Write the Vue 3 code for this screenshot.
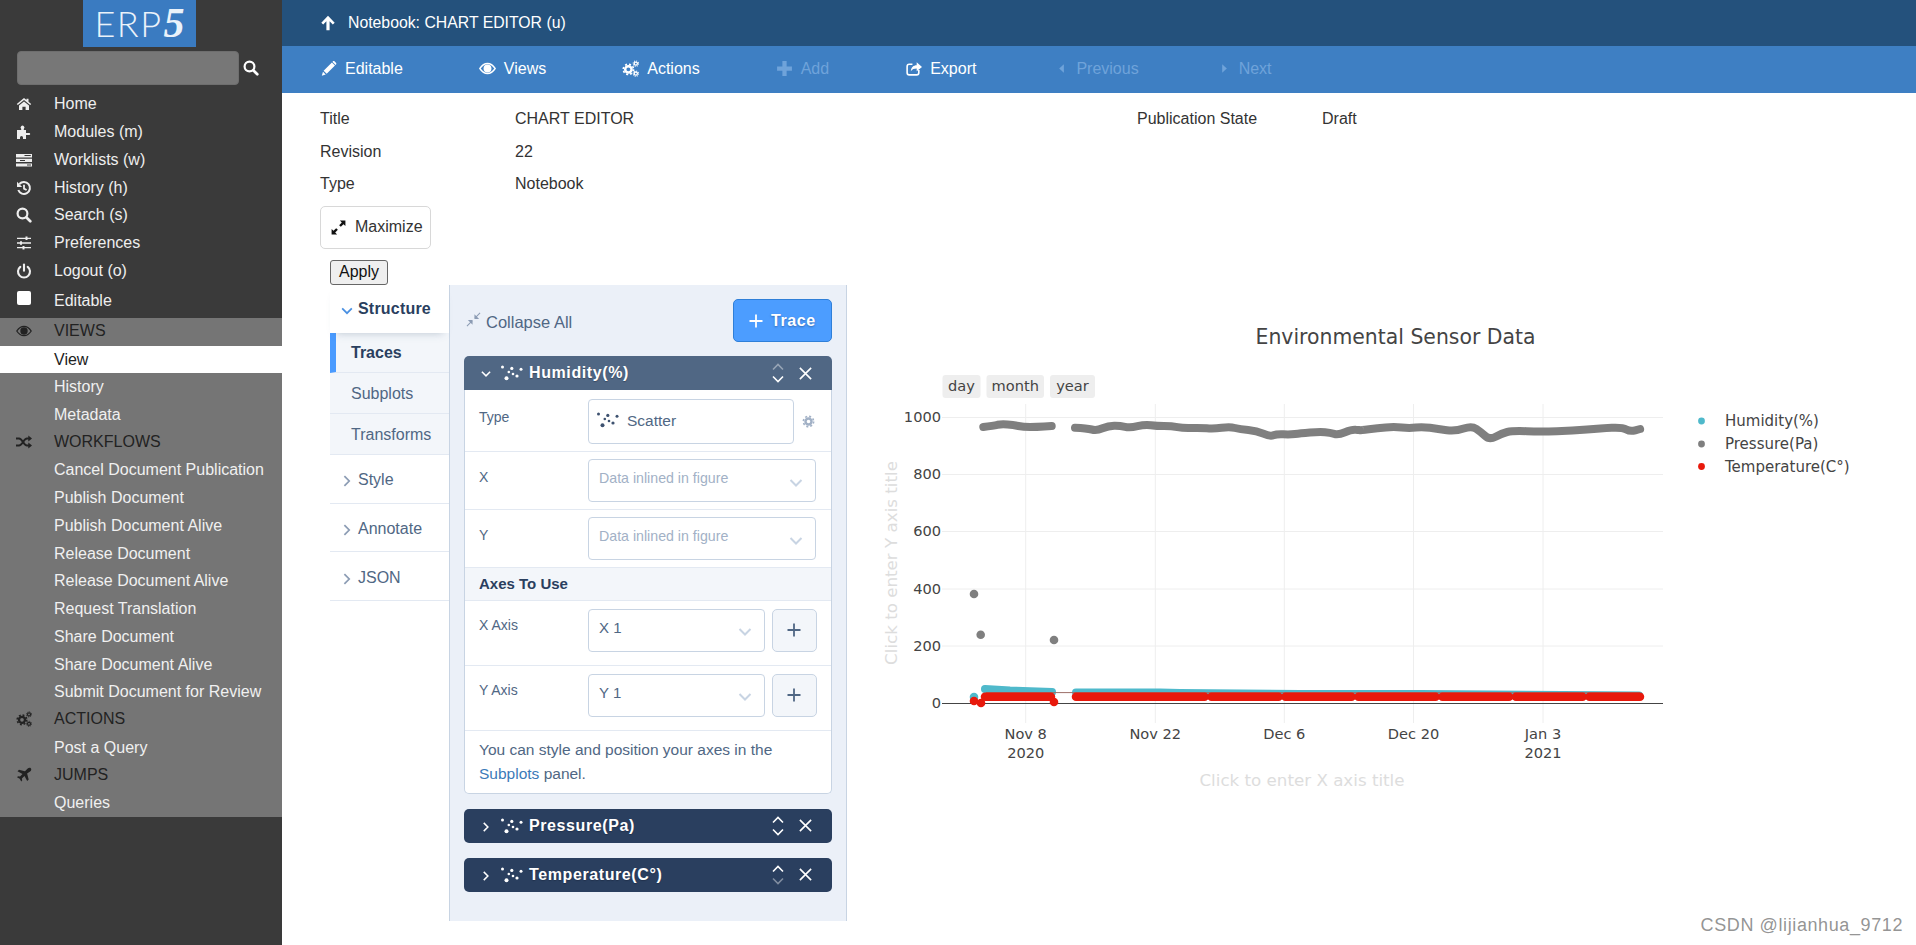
<script setup>
const sideTop = [
  { icon: 'home', label: 'Home' },
  { icon: 'puzzle', label: 'Modules (m)' },
  { icon: 'tasks', label: 'Worklists (w)' },
  { icon: 'history', label: 'History (h)' },
  { icon: 'search', label: 'Search (s)' },
  { icon: 'sliders', label: 'Preferences' },
  { icon: 'power', label: 'Logout (o)' }
]
const sideLower = [
  { icon: 'eye', label: 'VIEWS', head: true },
  { label: 'View', active: true },
  { label: 'History' },
  { label: 'Metadata' },
  { icon: 'random', label: 'WORKFLOWS', head: true },
  { label: 'Cancel Document Publication' },
  { label: 'Publish Document' },
  { label: 'Publish Document Alive' },
  { label: 'Release Document' },
  { label: 'Release Document Alive' },
  { label: 'Request Translation' },
  { label: 'Share Document' },
  { label: 'Share Document Alive' },
  { label: 'Submit Document for Review' },
  { icon: 'cogs', label: 'ACTIONS', head: true },
  { label: 'Post a Query' },
  { icon: 'plane', label: 'JUMPS', head: true },
  { label: 'Queries' }
]
const tools = [
  { icon: 'pencil', label: 'Editable' },
  { icon: 'eye', label: 'Views' },
  { icon: 'cogs', label: 'Actions' },
  { icon: 'plus', label: 'Add', off: true },
  { icon: 'share', label: 'Export' },
  { icon: 'caretl', label: 'Previous', off: true, small: true },
  { icon: 'caretr', label: 'Next', off: true, small: true }
]
const ctabs = ['Style', 'Annotate', 'JSON']
const closed = [
  { label: 'Pressure(Pa)' },
  { label: 'Temperature(C°)', last: true }
]

const toPts = (list, ox, oy, sx) => list.map(([x, y]) => [ox + x / sx, oy + y / 3])
const smooth = (p) => {
  let d = `M${p[0][0].toFixed(1)} ${p[0][1].toFixed(1)}`
  for (let i = 1; i < p.length - 1; i++) {
    const mx = (p[i][0] + p[i + 1][0]) / 2
    const my = (p[i][1] + p[i + 1][1]) / 2
    d += ` Q${p[i][0].toFixed(1)} ${p[i][1].toFixed(1)} ${mx.toFixed(1)} ${my.toFixed(1)}`
  }
  const l = p[p.length - 1]
  return d + ` L${l[0].toFixed(1)} ${l[1].toFixed(1)}`
}
const pressure1 = smooth(toPts([[340, 381], [370, 377], [395, 372], [430, 375], [460, 381], [500, 381], [545, 378]], 870, 300, 3))
const pressure2 = smooth([
  ...toPts([[615, 383], [650, 385], [680, 392], [715, 378], [750, 377], [780, 384], [825, 373], [860, 378], [905, 378], [940, 385], [990, 383], [1030, 387], [1080, 380], [1110, 388], [1160, 392], [1200, 410], [1220, 402], [1260, 404], [1290, 400], [1350, 395], [1380, 398], [1405, 405], [1445, 388], [1470, 390]], 870, 300, 3),
  ...toPts([[0, 121], [50, 115], [95, 110], [140, 115], [175, 110], [220, 117], [270, 124], [315, 107], [340, 125], [365, 150], [400, 130], [430, 122], [510, 125], [600, 122], [680, 115], [740, 112], [762, 125], [790, 117]], 1360, 390, 2.82)
])
const outliers = [[974, 594], [980.7, 634.7], [1054, 640]]
const yTicks = [[1000, 417.5], [800, 474.5], [600, 531.5], [400, 589], [200, 646]]
const xTicks = [
  { x: 1025.7, a: 'Nov 8', b: '2020' },
  { x: 1155.3, a: 'Nov 22' },
  { x: 1284.3, a: 'Dec 6' },
  { x: 1413.5, a: 'Dec 20' },
  { x: 1543, a: 'Jan 3', b: '2021' }
]
const ranges = [
  { x: 942.5, w: 38, label: 'day' },
  { x: 986.5, w: 57.5, label: 'month' },
  { x: 1050, w: 45, label: 'year' }
]
const legend = [
  { y: 421, c: '#4fb9cb', label: 'Humidity(%)' },
  { y: 444, c: '#7f7f7f', label: 'Pressure(Pa)' },
  { y: 466.5, c: '#e8190c', label: 'Temperature(C°)' }
]
const notches = [1076, 1208, 1282, 1355, 1439, 1512.5, 1586, 1640]
const redSegs = notches.slice(0, -1).map((a, i) => ({
  x1: i === 0 ? a : a + 3.4,
  x2: i === notches.length - 2 ? notches[i + 1] : notches[i + 1] - 3.4
}))
</script>

<template>
  <svg class="sprite" aria-hidden="true">
    <symbol id="i-home" viewBox="0 0 16 16"><path d="M8 2 .8 8l1 1.1L8 4l6.2 5.1 1-1.1-2.700-2.300V2.800h-2v1.200z"/><path d="M3 9.600 8 5.400l5 4.200V14H9.600v-3.200H6.400V14H3z"/></symbol>
    <symbol id="i-puzzle" viewBox="0 0 16 16"><path d="M1 6h4.200V5a1.900 1.900 0 1 1 2.600 0v1H10v3h3.200a1 1 0 0 1 0 2H10v4H7v-1.600a1.500 1.500 0 0 0-3 0V15H1z"/></symbol>
    <symbol id="i-tasks" viewBox="0 0 16 16"><path d="M0 2h16v3.400H0zM0 6.700h16v3.400H0zM0 11.400h16v3.100H0z"/><path fill="#3a3a3a" d="M8.500 3h6.300v1H8.500zM4 7.900h5v1H4zM11 12.400h4v1h-4z"/></symbol>
    <symbol id="i-history" viewBox="0 0 16 16"><path fill="none" stroke="currentColor" stroke-width="2" d="M3.400 4A6 6 0 1 1 2.300 10"/><path d="M1 1.800V7h5.200z"/><path fill="none" stroke="currentColor" stroke-width="1.800" d="M8 4.800v3.800l2.600 1.400"/></symbol>
    <symbol id="i-search" viewBox="0 0 16 16"><circle cx="6.500" cy="6.500" r="4.900" fill="none" stroke="currentColor" stroke-width="2.200"/><path stroke="currentColor" stroke-width="2.700" stroke-linecap="round" d="m10.500 10.500 3.800 3.800"/></symbol>
    <symbol id="i-sliders" viewBox="0 0 16 16"><path stroke="currentColor" stroke-width="1.300" d="M1 3.300h14M1 8h14M1 12.700h14"/><path d="M9.500 1.500h2v3.600h-2zM4 6.200h2v3.600H4zM6.500 10.900h2v3.600h-2z"/></symbol>
    <symbol id="i-power" viewBox="0 0 16 16"><path fill="none" stroke="currentColor" stroke-width="2.100" stroke-linecap="round" d="M8 1.500v6.300"/><path fill="none" stroke="currentColor" stroke-width="2.100" stroke-linecap="round" d="M4.300 3.800a6 6 0 1 0 7.400 0"/></symbol>
    <symbol id="i-eye" viewBox="0 0 16 16"><path fill="none" stroke="currentColor" stroke-width="1.300" d="M.8 8C3 4.600 5.400 3.300 8 3.300S13 4.600 15.200 8C13 11.400 10.600 12.700 8 12.700S3 11.400.8 8z"/><circle cx="8" cy="8" r="3.700"/></symbol>
    <symbol id="i-random" viewBox="0 0 16 16"><path fill="none" stroke="currentColor" stroke-width="2" d="M0 4.500h3c3.500 0 4.500 7 8 7h2M0 11.500h3c3.500 0 4.500-7 8-7h2"/><path d="M12.300 1.500 16 4.500l-3.700 3zM12.300 8.500l3.700 3-3.700 3z"/></symbol>
    <symbol id="i-cogs" viewBox="0 0 16 16"><circle cx="6" cy="8.800" r="3" fill="none" stroke="currentColor" stroke-width="2.300"/><circle cx="6" cy="8.800" r="4.800" fill="none" stroke="currentColor" stroke-width="1.600" stroke-dasharray="1.900 1.870"/><circle cx="13" cy="3.400" r="1.500" fill="none" stroke="currentColor" stroke-width="1.200"/><circle cx="13" cy="3.400" r="2.500" fill="none" stroke="currentColor" stroke-width="1" stroke-dasharray="1 .96"/><circle cx="13" cy="12.800" r="1.500" fill="none" stroke="currentColor" stroke-width="1.200"/><circle cx="13" cy="12.800" r="2.500" fill="none" stroke="currentColor" stroke-width="1" stroke-dasharray="1 .96"/></symbol>
    <symbol id="i-plane" viewBox="0 0 16 16"><path d="M14.800 1.200c-.9-.9-2.300-.4-3.100.4L9 4.300 3 2.700 1.500 4.200l5 2.700L4 9.500l-2-.3-1 1 2.700 1.500 1.500 2.700 1-1-.3-2 2.600-2.500 2.700 5 1.500-1.500-1.600-6L14.400 4.300c.8-.8 1.300-2.200.4-3.100z"/></symbol>
    <symbol id="i-pencil" viewBox="0 0 16 16"><path d="M11.200 2.300l2.900 2.900-7.800 7.800-2.900-2.900zM12 1.400c.5-.5 1.300-.5 1.800 0l1.200 1.200c.5.500.5 1.300 0 1.800l-.3.300-2.900-2.900zM2.800 11l2.600 2.600-3.700 1.200z"/></symbol>
    <symbol id="i-plus" viewBox="0 0 16 16"><path d="M6 1h4v5h5v4h-5v5H6v-5H1V6h5z"/></symbol>
    <symbol id="i-share" viewBox="0 0 16 16"><path fill="none" stroke="currentColor" stroke-width="1.500" d="M13 9.500V12a2 2 0 0 1-2 2H4a2 2 0 0 1-2-2V6a2 2 0 0 1 2-2h3"/><path d="M5.500 10.500C5.800 7 8 5 11 5V2l5 4.500L11 10.500V8c-2.500 0-4.200.7-5.500 2.500z"/></symbol>
    <symbol id="i-caretl" viewBox="0 0 16 16"><path d="M10.500 3.500v9L5.500 8z"/></symbol>
    <symbol id="i-caretr" viewBox="0 0 16 16"><path d="M5.500 3.500v9l5-4.500z"/></symbol>
    <symbol id="i-up" viewBox="0 0 16 16"><path d="M8 .8l6.700 7-1.900 1.800-3.200-3.300V15.200H6.400V6.300L3.200 9.600 1.300 7.800z"/></symbol>
    <symbol id="i-expand" viewBox="0 0 16 16"><path d="M9.300 1.500h5.200v5.200l-1.800-1.800-2.500 2.500-1.600-1.600 2.500-2.500zM6.700 14.500H1.500V9.300l1.800 1.800 2.500-2.500 1.600 1.600-2.500 2.500z"/></symbol>
    <symbol id="i-scatter" viewBox="0 0 22 16"><circle cx="1.500" cy="2" r="1.500"/><circle cx="5.500" cy="13.200" r="2"/><circle cx="7.800" cy="7" r="1.300"/><circle cx="10.800" cy="3.400" r="1.600"/><circle cx="12" cy="9" r="1.300"/><circle cx="16" cy="11" r="1.600"/><circle cx="20" cy="4.200" r="1.500"/></symbol>
    <symbol id="i-gear" viewBox="0 0 16 16"><circle cx="8" cy="8" r="3.700" fill="none" stroke="currentColor" stroke-width="3"/><circle cx="8" cy="8" r="6.300" fill="none" stroke="currentColor" stroke-width="2" stroke-dasharray="2.500 2.450"/></symbol>
    <symbol id="i-down" viewBox="0 0 16 16"><path fill="none" stroke="currentColor" stroke-width="2" d="M2.500 5 8 10.500 13.500 5"/></symbol>
    <symbol id="i-right" viewBox="0 0 16 16"><path fill="none" stroke="currentColor" stroke-width="2" d="M5 2.500 10.500 8 5 13.500"/></symbol>
    <symbol id="i-close" viewBox="0 0 16 16"><path fill="none" stroke="currentColor" stroke-width="1.700" d="M2 2l12 12M14 2 2 14"/></symbol>
    <symbol id="i-collapse" viewBox="0 0 16 16"><path fill="none" stroke="currentColor" stroke-width="1.100" d="M15 1 9.500 6.500M1 15l5.500-5.500"/><path d="M9 2.500v5h5zM7 13.500v-5H2z"/></symbol>
    <symbol id="i-addp" viewBox="0 0 16 16"><path fill="none" stroke="currentColor" stroke-width="1.800" d="M8 1.500v13M1.500 8h13"/></symbol>
    <symbol id="i-up2" viewBox="0 0 14 14"><path fill="none" stroke="currentColor" stroke-width="1.600" d="M2 9.500 7 4.500l5 5"/></symbol>
    <symbol id="i-down2" viewBox="0 0 14 14"><path fill="none" stroke="currentColor" stroke-width="1.600" d="M2 4.500 7 9.500l5-5"/></symbol>
  </svg>

  <div class="page">
    <aside class="side">
      <div class="logo"><span class="logo-erp">ERP</span><span class="logo-five">5</span></div>
      <div class="side-search">
        <div class="side-input"></div>
        <svg class="side-search-icon"><use href="#i-search" /></svg>
      </div>
      <div class="side-row" v-for="item in sideTop" :key="item.label">
        <svg class="side-icon"><use :href="'#i-' + item.icon" /></svg>
        <span>{{ item.label }}</span>
      </div>
      <div class="side-check">
        <span class="check-box"></span>
        <span>Editable</span>
      </div>
      <div class="side-lower">
        <div
          class="side-row"
          v-for="item in sideLower"
          :key="item.label + item.icon"
          :class="{ head: item.head, active: item.active }"
        >
          <svg v-if="item.icon" class="side-icon"><use :href="'#i-' + item.icon" /></svg>
          <span v-else class="side-icon"></span>
          <span>{{ item.label }}</span>
        </div>
      </div>
    </aside>

    <main class="main">
      <header class="title-bar">
        <svg class="up-icon"><use href="#i-up" /></svg>
        <span>Notebook: CHART EDITOR (u)</span>
      </header>
      <nav class="tool-bar">
        <div class="tool" v-for="t in tools" :key="t.label" :class="{ off: t.off, small: t.small }">
          <svg class="tool-icon"><use :href="'#i-' + t.icon" /></svg>
          <span>{{ t.label }}</span>
        </div>
      </nav>

      <section class="doc">
        <div class="fields">
          <div class="field-col">
            <div class="field"><span class="f-label">Title</span><span>CHART EDITOR</span></div>
            <div class="field"><span class="f-label">Revision</span><span>22</span></div>
            <div class="field"><span class="f-label">Type</span><span>Notebook</span></div>
          </div>
          <div class="field-col right">
            <div class="field"><span class="f-label">Publication State</span><span>Draft</span></div>
          </div>
        </div>
        <button class="maxi" type="button">
          <svg class="maxi-icon"><use href="#i-expand" /></svg>
          <span>Maximize</span>
        </button>
        <button class="apply" type="button">Apply</button>

        <div class="workspace">
          <div class="tabs">
            <div class="tab-open">
              <svg class="tab-chev blue"><use href="#i-down" /></svg>
              <span>Structure</span>
            </div>
            <div class="subtab current">Traces</div>
            <div class="subtab">Subplots</div>
            <div class="subtab">Transforms</div>
            <div class="tab-closed" v-for="t in ctabs" :key="t">
              <svg class="tab-chev"><use href="#i-right" /></svg>
              <span>{{ t }}</span>
            </div>
          </div>

          <div class="panel">
            <div class="panel-top">
              <div class="collapse">
                <svg class="collapse-icon"><use href="#i-collapse" /></svg>
                <span>Collapse All</span>
              </div>
              <button class="trace-btn" type="button">
                <svg class="trace-plus"><use href="#i-addp" /></svg>
                <span>Trace</span>
              </button>
            </div>

            <div class="card-head open">
              <svg class="head-chev"><use href="#i-down" /></svg>
              <svg class="head-scatter"><use href="#i-scatter" /></svg>
              <span class="head-label">Humidity(%)</span>
              <div class="updown">
                <svg class="faded"><use href="#i-up2" /></svg>
                <svg><use href="#i-down2" /></svg>
              </div>
              <svg class="head-close"><use href="#i-close" /></svg>
            </div>
            <div class="card-body">
              <div class="row row-type">
                <label>Type</label>
                <div class="ctrl type-ctrl">
                  <svg class="type-scatter"><use href="#i-scatter" /></svg>
                  <span class="type-name">Scatter</span>
                </div>
                <svg class="type-gear"><use href="#i-gear" /></svg>
              </div>
              <div class="row row-data">
                <label>X</label>
                <div class="ctrl data-ctrl">
                  <span class="ph">Data inlined in figure</span>
                  <svg class="ctrl-chev"><use href="#i-down" /></svg>
                </div>
              </div>
              <div class="row row-data">
                <label>Y</label>
                <div class="ctrl data-ctrl">
                  <span class="ph">Data inlined in figure</span>
                  <svg class="ctrl-chev"><use href="#i-down" /></svg>
                </div>
              </div>
              <div class="axes-title">Axes To Use</div>
              <div class="row row-axis">
                <label>X Axis</label>
                <div class="ctrl axis-ctrl">
                  <span class="val">X 1</span>
                  <svg class="ctrl-chev"><use href="#i-down" /></svg>
                </div>
                <div class="add-axis"><svg><use href="#i-addp" /></svg></div>
              </div>
              <div class="row row-axis">
                <label>Y Axis</label>
                <div class="ctrl axis-ctrl">
                  <span class="val">Y 1</span>
                  <svg class="ctrl-chev"><use href="#i-down" /></svg>
                </div>
                <div class="add-axis"><svg><use href="#i-addp" /></svg></div>
              </div>
              <p class="note">You can style and position your axes in the <a class="link">Subplots</a> panel.</p>
            </div>

            <div class="card-head closed" v-for="c in closed" :key="c.label">
              <svg class="head-chev"><use href="#i-right" /></svg>
              <svg class="head-scatter"><use href="#i-scatter" /></svg>
              <span class="head-label">{{ c.label }}</span>
              <div class="updown">
                <svg><use href="#i-up2" /></svg>
                <svg :class="{ faded: c.last }"><use href="#i-down2" /></svg>
              </div>
              <svg class="head-close"><use href="#i-close" /></svg>
            </div>
          </div>

          <svg class="plot" viewBox="847 285 1069 636">
            <text x="1395.500" y="344" text-anchor="middle" class="p-title">Environmental Sensor Data</text>

            <g class="grid">
              <line v-for="t in xTicks" :key="t.a" :x1="t.x" :x2="t.x" y1="404" y2="723" />
              <line v-for="t in yTicks" :key="t[0]" x1="942" x2="1663" :y1="t[1]" :y2="t[1]" />
            </g>
            <line x1="942" x2="1663" y1="703.500" y2="703.500" class="zero" />

            <g v-for="r in ranges" :key="r.label">
              <rect :x="r.x" y="375" :width="r.w" height="23" rx="3" class="r-btn" />
              <text :x="r.x + r.w / 2" y="390.500" text-anchor="middle" class="p-range">{{ r.label }}</text>
            </g>

            <text v-for="t in yTicks" :key="'l' + t[0]" x="941" :y="t[1] + 4.5" text-anchor="end" class="p-tick">{{ t[0] }}</text>
            <text x="941" y="708" text-anchor="end" class="p-tick">0</text>
            <g v-for="t in xTicks" :key="'x' + t.a">
              <text :x="t.x" y="739" text-anchor="middle" class="p-tick">{{ t.a }}</text>
              <text v-if="t.b" :x="t.x" y="758" text-anchor="middle" class="p-tick">{{ t.b }}</text>
            </g>

            <text x="1302" y="786" text-anchor="middle" class="p-axis">Click to enter X axis title</text>
            <text x="0" y="0" text-anchor="middle" class="p-axis" transform="translate(897 563) rotate(-90)">Click to enter Y axis title</text>

            <g class="s-hum">
              <circle cx="974" cy="697" r="4.300" />
              <polyline points="985,689 1010,690.500 1052,692" />
              <polyline points="1076,692.500 1160,692.500 1180,693 1300,694 1420,694 1639,695.500" />
            </g>
            <g class="s-pre">
              <path :d="pressure1" />
              <path :d="pressure2" />
              <circle v-for="o in outliers" :key="o[0]" :cx="o[0]" :cy="o[1]" r="4.300" />
            </g>
            <line x1="986" x2="1640" y1="692.600" y2="692.600" class="s-brown" />
            <g class="s-tem">
              <circle cx="974" cy="701" r="4.300" />
              <circle cx="981" cy="703" r="4.300" />
              <circle cx="1054" cy="702" r="4.300" />
              <line x1="985" x2="1051" y1="696.700" y2="696.700" />
              <line v-for="s in redSegs" :key="s.x1" :x1="s.x1" :x2="s.x2" y1="696.700" y2="696.700" />
            </g>

            <g v-for="l in legend" :key="l.label">
              <circle cx="1701.500" :cy="l.y" r="3.400" :fill="l.c" />
              <text x="1725" :y="l.y + 5" class="p-legend">{{ l.label }}</text>
            </g>
          </svg>
        </div>
      </section>
    </main>
    <div class="mark">CSDN @lijianhua_9712</div>
  </div>
</template>

<style>
html, body { margin: 0; padding: 0; background: #fff; }
</style>

<style scoped>
.sprite { position: absolute; width: 0; height: 0; overflow: hidden; }
.page {
  position: relative;
  display: flex;
  width: 1916px;
  height: 945px;
  overflow: hidden;
  font-family: "Liberation Sans", Arial, sans-serif;
  font-size: 16px;
  color: #333;
  background: #fff;
}
svg { fill: currentColor; display: block; }

/* sidebar */
.side { width: 282px; flex: none; background: #3a3a3a; color: #eee; }
.logo {
  width: 113px;
  height: 47px;
  margin-left: 83px;
  background: #3a7bc1;
  color: #eaf2fa;
  display: flex;
  align-items: center;
  justify-content: center;
  line-height: 47px;
}
.logo-erp { font-family: Lato, sans-serif; font-weight: 300; font-size: 36px; letter-spacing: 1.5px; }
.logo-five { font-family: "Liberation Serif", serif; font-style: italic; font-weight: 700; font-size: 42px; margin-left: 1px; }
.side-search { display: flex; align-items: center; height: 34px; margin: 4px 0 5.500px 16.500px; }
.side-input { width: 222px; height: 34px; background: #777; border-radius: 4px; border: 1px solid #6e6e6e; box-sizing: border-box; }
.side-search-icon { width: 16px; height: 16px; margin-left: 4px; color: #fff; }
.side-row { display: flex; align-items: center; height: 27.720px; box-sizing: border-box; }
.side-icon { width: 16px; height: 16px; margin: 0 22px 0 16px; flex: none; }
.side-check { display: flex; align-items: center; height: 33.500px; box-sizing: border-box; }
.check-box { width: 14px; height: 14px; background: #fff; border-radius: 2px; margin: -6px 23px 0 17px; }
.side-lower { background: #757575; height: 499px; }
.side-lower .side-row { color: #f0f0f0; }
.side-lower .head { color: #222; padding-bottom: 1.500px; }
.side-lower .active { background: #fff; color: #222; }

/* main */
.main { flex: 1; min-width: 0; display: flex; flex-direction: column; }
.title-bar {
  height: 46px;
  background: #24517c;
  color: #fff;
  display: flex;
  align-items: center;
  padding-left: 38px;
  font-size: 15.800px;
}
.up-icon { width: 16px; height: 16px; margin-right: 12px; }
.tool-bar {
  height: 47px;
  background: #3e7fc3;
  color: #fff;
  display: flex;
  align-items: center;
  gap: 76px;
  padding: 0 0 2px 38px;
  box-sizing: border-box;
}
.tool { display: flex; align-items: center; }
.tool.off { color: #6fa3da; }
.tool-icon { width: 17px; height: 17px; margin-right: 8px; }
.tool.small { margin-left: 2px; }
.tool.small .tool-icon { width: 15px; height: 15px; margin-right: 7px; }

.doc { flex: 1; min-height: 0; display: flex; flex-direction: column; align-items: flex-start; padding-left: 38px; }
.fields { display: flex; width: 100%; height: 113px; padding-top: 10px; box-sizing: border-box; }
.field-col { width: 817px; flex: none; }
.field { display: flex; align-items: center; height: 32.500px; }
.field-col .f-label { width: 195px; }
.right .f-label { width: 185px; }
.maxi {
  width: 111px;
  height: 43px;
  padding: 0 0 1px 9px;
  border: 1px solid #d8d8d8;
  border-radius: 5px;
  background: #fff;
  display: flex;
  align-items: center;
  font: inherit;
  color: #333;
  box-sizing: border-box;
}
.maxi-icon { width: 17px; height: 17px; margin-right: 8px; color: #111; }
.apply {
  width: 58px;
  height: 25px;
  margin: 11px 0 0 10px;
  padding: 0 0 2px;
  border: 1px solid #666;
  border-radius: 3px;
  background: #efefef;
  font: inherit;
  color: #111;
  box-sizing: border-box;
}
.workspace { flex: none; height: 636px; margin-left: 10px; display: flex; width: 1586px; }

/* tabs */
.tabs { width: 119px; flex: none; color: #506784; }
.tab-open {
  height: 48px;
  display: flex;
  align-items: center;
  font-weight: 700;
  color: #2a3f5f;
  letter-spacing: .2px;
  box-shadow: 0 6px 8px -6px rgba(80, 103, 132, .35);
  position: relative;
  box-sizing: border-box;
}
.tab-chev { width: 14px; height: 14px; margin: 2px 4px 0 10px; color: #8c9cb4; flex: none; }
.tab-chev.blue { color: #4a90e2; margin-top: 4px; }
.subtab {
  height: 41px;
  background: #f3f6fa;
  display: flex;
  align-items: center;
  padding: 2px 0 0 21px;
  border-bottom: 1px solid #e3e9f2;
  box-sizing: border-box;
}
.subtab.current { font-weight: 700; color: #2a3f5f; padding: 0 0 0 15px; border-left: 6px solid #4a9bff; height: 40px; }
.tab-closed {
  height: 48.700px;
  display: flex;
  align-items: center;
  padding-top: 3px;
  border-bottom: 1px solid #e3e9f2;
  box-sizing: border-box;
  color: #506784;
}

/* panel */
.panel {
  width: 398px;
  flex: none;
  box-sizing: border-box;
  background: #ebf0f8;
  border-left: 1px solid #c8d4e3;
  border-right: 1px solid #c8d4e3;
  padding: 14px 14px 0 14px;
}
.panel-top { display: flex; justify-content: space-between; height: 57px; }
.collapse { display: flex; align-items: center; color: #506784; font-size: 16.500px; height: 43px; padding-bottom: 1px; box-sizing: border-box; margin-top: 2px; margin-left: 2px; }
.collapse-icon { width: 15px; height: 15px; margin: -6px 5px 0 0; color: #8c9cb4; }
.trace-btn {
  width: 99px;
  height: 43px;
  border: 1px solid #2f7fd8;
  border-radius: 5px;
  background: #4c9dff;
  color: #fff;
  font: inherit;
  font-weight: 700;
  letter-spacing: .6px;
  display: flex;
  align-items: center;
  padding: 0 0 0 14px;
  box-sizing: border-box;
  text-shadow: 0 1px 2px rgba(30, 60, 110, .5);
}
.trace-plus { width: 16px; height: 16px; margin-right: 7px; }
.card-head {
  height: 34px;
  display: flex;
  align-items: center;
  color: #fff;
  border-radius: 5px;
  padding-left: 16px;
}
.card-head.open { background: #506784; border-radius: 5px 5px 0 0; }
.card-head.closed { background: #2a3f5f; margin-top: 14.500px; height: 34.500px; }
.head-chev { width: 12px; height: 12px; margin-right: 9px; margin-top: 2px; }
.head-scatter { width: 22px; height: 16px; margin-right: 6px; }
.head-label { font-size: 16px; font-weight: 700; letter-spacing: .6px; flex: 1; text-shadow: 0 1px 1px rgba(20, 30, 50, .4); }
.updown { width: 14px; margin-right: 12.500px; display: flex; flex-direction: column; }
.updown svg { width: 14px; height: 14px; margin: -1px 0; }
.updown .faded { opacity: .4; }
.head-close { width: 15px; height: 15px; margin-right: 19.500px; }

.card-body {
  background: #fff;
  border: 1px solid #c8d4e3;
  border-top: none;
  border-radius: 0 0 5px 5px;
}
.row { display: flex; align-items: flex-start; border-bottom: 1px solid #e3e9f2; box-sizing: border-box; padding-left: 14px; font-size: 14px; color: #506784; }
.row label { width: 109px; flex: none; }
.ctrl { border: 1px solid #c8d4e3; border-radius: 4px; box-sizing: border-box; display: flex; align-items: center; background: #fff; }
.row-type { height: 62px; padding-top: 9px; }
.row-type label { padding-top: 10px; }
.type-ctrl { width: 206px; height: 45px; padding-left: 8px; font-size: 15.500px; color: #506784; }
.type-name { margin-top: -2px; }
.type-scatter { width: 22px; height: 16px; margin: -3px 8px 0 0; color: #3e5270; }
.type-gear { width: 13px; height: 13px; margin: 16px 0 0 8px; color: #a2b1c6; }
.row-data { height: 58px; padding-top: 7px; }
.row-data label { padding-top: 10px; }
.data-ctrl { width: 228px; height: 43px; padding-left: 10px; justify-content: space-between; }
.ph { color: #a2b1c6; margin-top: -6px; font-size: 14.200px; }
.ctrl-chev { width: 16px; height: 16px; margin: 4px 11px 0 0; color: #c8d4e3; }
.axes-title { height: 33px; line-height: 32px; padding-left: 14px; background: #f3f6fa; color: #2a3f5f; font-weight: 700; font-size: 15px; border-bottom: 1px solid #e3e9f2; box-sizing: border-box; }
.row-axis { height: 65px; padding-top: 7.500px; }
.row-axis label { padding-top: 8px; }
.axis-ctrl { width: 177px; height: 43px; padding-left: 10px; justify-content: space-between; }
.val { font-size: 15px; margin-top: -6px; }
.add-axis { width: 45px; height: 43px; margin-left: 6.500px; border: 1px solid #c8d4e3; border-radius: 5px; background: #f3f6fa; box-sizing: border-box; display: flex; align-items: center; justify-content: center; color: #506784; }
.add-axis svg { width: 16px; height: 16px; }
.note { margin: 0; padding: 7px 14px 7px; font-size: 15.500px; line-height: 24px; color: #506784; }
.link { color: #3b7ab8; }

/* chart */
.plot { width: 1069px; height: 636px; flex: none; }
.grid line { stroke: #eee; stroke-width: 1; }
.zero { stroke: #444; stroke-width: 1; }
.r-btn { fill: #eee; }
.p-title { font-family: "DejaVu Sans", sans-serif; font-size: 20.400px; fill: #444; }
.p-range, .p-tick { font-family: "DejaVu Sans", sans-serif; font-size: 14.600px; fill: #444; }
.p-legend { font-family: "DejaVu Sans", sans-serif; font-size: 15px; fill: #444; }
.p-axis { font-family: "DejaVu Sans", sans-serif; font-size: 16.700px; fill: #ddd; }
.s-hum polyline, .s-pre path { fill: none; stroke-linecap: round; stroke-linejoin: round; }
.s-hum polyline { stroke: #4fb9cb; stroke-width: 8; }
.s-hum circle { fill: #4fb9cb; }
.s-pre path { stroke: #7f7f7f; stroke-width: 8; }
.s-pre circle { fill: #7f7f7f; }
.s-tem line { stroke: #e8190c; stroke-width: 8.500; stroke-linecap: round; }
.s-tem circle { fill: #e8190c; }
.s-brown { stroke: #9c6f68; stroke-width: 1; }

.mark {
  position: absolute;
  right: 13px;
  bottom: 9px;
  font-size: 18px;
  letter-spacing: .6px;
  color: rgba(120, 120, 120, .8);
}
</style>
